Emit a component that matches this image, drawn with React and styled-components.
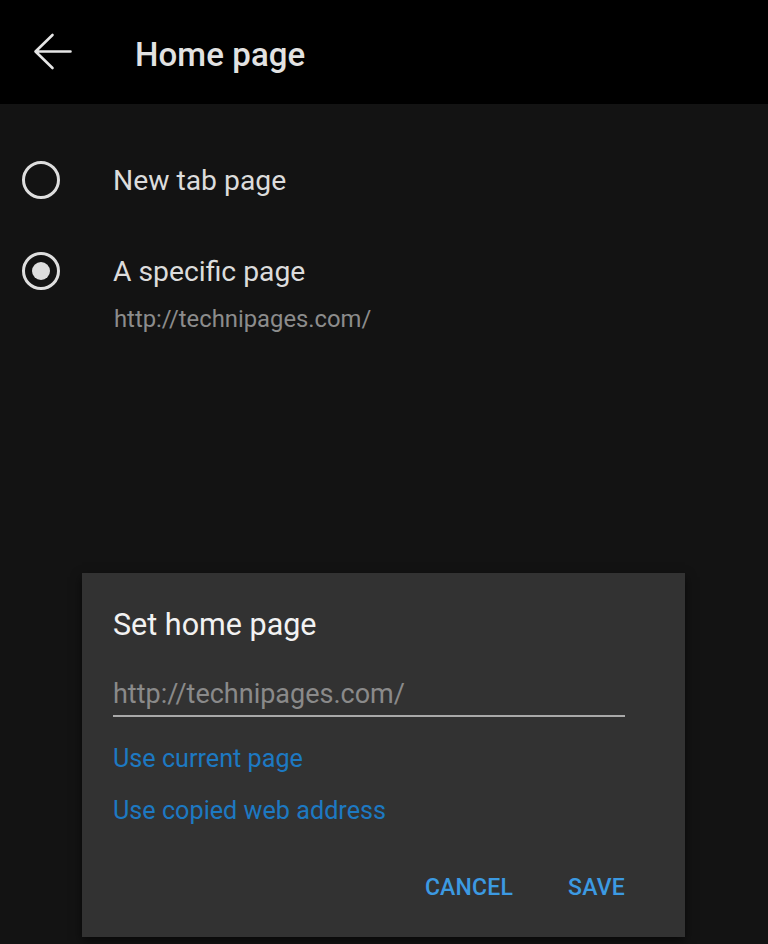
import React from "react";
import styled, { createGlobalStyle } from "styled-components";

const Global = createGlobalStyle`
  html, body { margin: 0; padding: 0; background: #131313; }
  body { font-family: Roboto, "Noto Sans", sans-serif; }
  * { box-sizing: border-box; }
`;

const Screen = styled.div`
  position: relative;
  width: 768px;
  height: 944px;
  background: #131313;
  overflow: hidden;
`;

const Toolbar = styled.header`
  height: 104px;
  background: #000;
  display: flex;
  align-items: center;
  padding-left: 33px;
`;

const BackButton = styled.button`
  background: none;
  border: 0;
  padding: 0;
  width: 40px;
  height: 40px;
  display: flex;
  align-items: center;
  justify-content: center;
  margin-top: -2px;
`;

const Title = styled.h1`
  margin: 4px 0 0 62px;
  font-size: 33px;
  font-weight: 500;
  color: #e2e2e2;
  letter-spacing: 0.1px;
`;

const List = styled.div`
  display: flex;
  flex-direction: column;
  padding-top: 57px;
`;

const Row = styled.div`
  display: flex;
  align-items: flex-start;
  padding-left: 22px;
  height: ${(p) => p.$h}px;
`;

const Radio = styled.span`
  flex: none;
  width: 38px;
  height: 38px;
  border-radius: 50%;
  border: 3px solid #dedede;
  display: flex;
  align-items: center;
  justify-content: center;
  &::after {
    content: "";
    display: ${(p) => (p.$checked ? "block" : "none")};
    width: 18px;
    height: 18px;
    border-radius: 50%;
    background: #dedede;
  }
`;

const Texts = styled.div`
  margin-left: 53px;
  display: flex;
  flex-direction: column;
  padding-top: 1px;
`;

const Label = styled.div`
  font-size: 28.3px;
  color: #dcdcdc;
  line-height: 38px;
`;

const Sub = styled.div`
  font-size: 23.8px;
  color: #8c8c8c;
  line-height: 28px;
  margin-top: 14px;
  margin-left: 1px;
`;

const Dialog = styled.div`
  position: absolute;
  left: 82px;
  top: 573px;
  width: 603px;
  height: 364px;
  background: #323232;
  box-shadow: 0 4px 10px rgba(0, 0, 0, 0.6);
  padding: 30px 60px 0 31px;
  display: flex;
  flex-direction: column;
`;

const DialogTitle = styled.h2`
  margin: 0;
  font-size: 30.5px;
  font-weight: 400;
  color: #f2f2f2;
  line-height: 44px;
`;

const Field = styled.div`
  margin-top: 31px;
  border-bottom: 2px solid #a9a9a9;
  font-size: 27px;
  color: #8a8a8a;
  line-height: 32px;
  padding-bottom: 5px;
`;

const LinkAction = styled.div`
  font-size: 25.2px;
  color: #1d79c2;
  line-height: 32px;
  margin-top: ${(p) => p.$mt}px;
`;

const Actions = styled.div`
  display: flex;
  justify-content: flex-end;
  gap: 55px;
  margin-top: 45px;
`;

const ActionButton = styled.button`
  background: none;
  border: 0;
  padding: 0;
  font-family: Roboto, sans-serif;
  font-size: 23px;
  font-weight: 500;
  color: #3c9ae2;
  letter-spacing: 0.2px;
  line-height: 32px;
`;

export default function App() {
  return (
    <>
      <Global />
      <Screen>
        <Toolbar>
          <BackButton aria-label="Back">
            <svg width="40" height="40" viewBox="0 0 40 40" fill="none">
              <path
                d="M37.5 20.5H3M19.5 4L2.5 20.5L19.5 37"
                stroke="#e6e6e6"
                strokeWidth="2.6"
                strokeLinecap="round"
                strokeLinejoin="round"
              />
            </svg>
          </BackButton>
          <Title>Home page</Title>
        </Toolbar>
        <List>
          <Row $h={91}>
            <Radio />
            <Texts>
              <Label>New tab page</Label>
            </Texts>
          </Row>
          <Row $h={120}>
            <Radio $checked />
            <Texts>
              <Label>A specific page</Label>
              <Sub>http://technipages.com/</Sub>
            </Texts>
          </Row>
        </List>
        <Dialog>
          <DialogTitle>Set home page</DialogTitle>
          <Field>http://technipages.com/</Field>
          <LinkAction $mt={26}>Use current page</LinkAction>
          <LinkAction $mt={20}>Use copied web address</LinkAction>
          <Actions>
            <ActionButton>CANCEL</ActionButton>
            <ActionButton>SAVE</ActionButton>
          </Actions>
        </Dialog>
      </Screen>
    </>
  );
}
